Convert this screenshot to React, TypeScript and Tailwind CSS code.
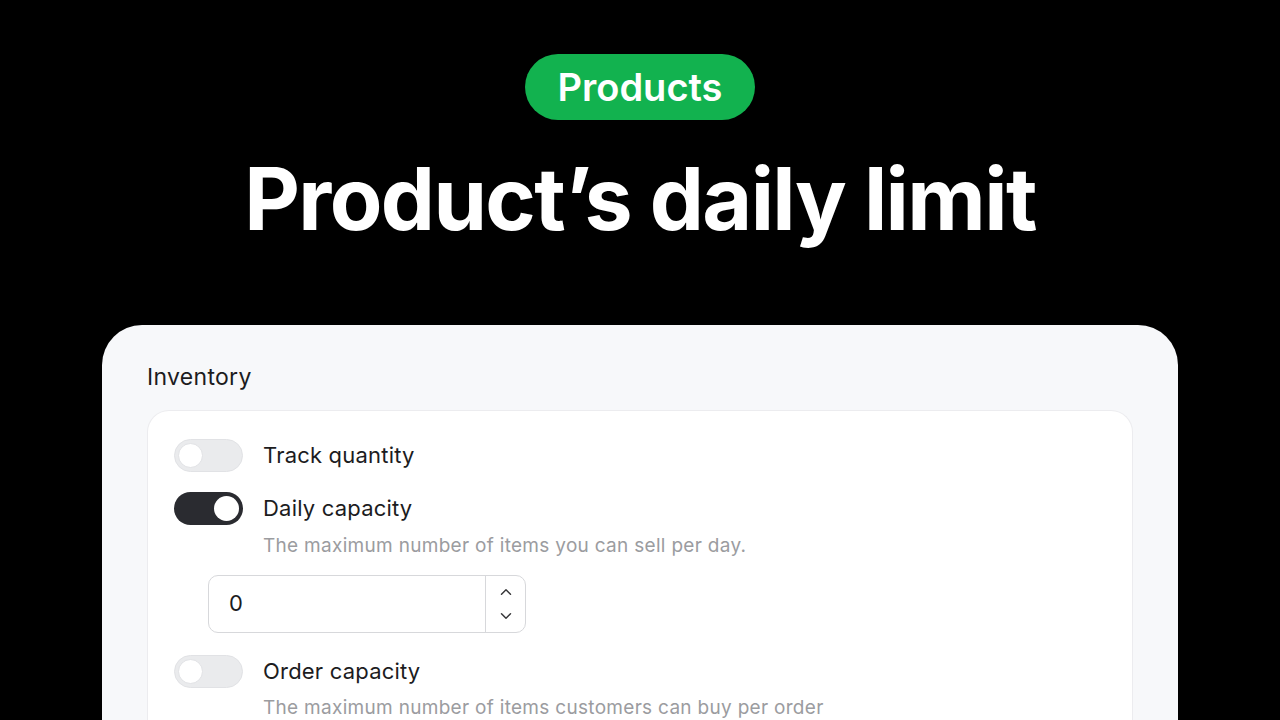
import { ChevronUp, ChevronDown } from "lucide-react";

function Toggle({ on }: { on?: boolean }) {
  return (
    <div
      className={
        on
          ? "flex h-[33px] w-[69px] shrink-0 items-center justify-end rounded-full bg-[#2a2b30] px-[4px]"
          : "flex h-[33px] w-[69px] shrink-0 items-center justify-start rounded-full border border-[#e1e2e5] bg-[#eaebed] px-[3px]"
      }
    >
      <div
        className={
          on
            ? "h-[25px] w-[25px] rounded-full bg-white"
            : "h-[25px] w-[25px] rounded-full border border-[#e1e2e5] bg-white"
        }
      />
    </div>
  );
}

function Row({ on, label }: { on?: boolean; label: string }) {
  return (
    <div className="flex items-center gap-[20px]">
      <Toggle on={on} />
      <span className="text-[22px] tracking-[0.2px] text-[#1c1c1e]">{label}</span>
    </div>
  );
}

function Hint({ children }: { children: React.ReactNode }) {
  return <p className="pl-[89px] text-[19px] tracking-[0.3px] text-[#9b9ca0]">{children}</p>;
}

export default function App() {
  return (
    <div className="flex h-[720px] w-[1280px] flex-col items-center overflow-hidden bg-black font-['Inter',sans-serif]">
      <div className="mt-[54px] flex h-[66px] w-[230px] shrink-0 items-center justify-center rounded-full bg-[#12b24f] text-[38px] font-semibold text-white">
        Products
      </div>
      <h1 className="mt-[27px] shrink-0 text-[86px] leading-[104px] font-bold tracking-[-1.6px] text-white">
        Product’s daily limit
      </h1>

      <div className="mt-[74px] flex w-[1076px] flex-1 shrink-0 flex-col rounded-t-[40px] bg-[#f7f8fa] px-[45px] pt-[38px]">
        <h2 className="text-[23px] leading-[28px] font-normal tracking-[0.3px] text-[#1c1c1e]">Inventory</h2>
        <div className="mt-[19px] flex flex-1 flex-col rounded-t-[22px] border border-b-0 border-[#ececef] bg-white pt-[28px] pl-[26px]">
          <Row label="Track quantity" />
          <div className="mt-[20px]">
            <Row on label="Daily capacity" />
          </div>
          <div className="mt-[7px]">
            <Hint>The maximum number of items you can sell per day.</Hint>
          </div>
          <div className="mt-[14px] ml-[34px] flex h-[58px] w-[318px] shrink-0 overflow-hidden rounded-[10px] border border-[#d7d8db]">
            <div className="flex flex-1 items-center pl-[20px] text-[22px] text-[#1c1c1e]">0</div>
            <div className="flex w-[40px] flex-col items-center justify-center border-l border-[#d7d8db] text-[#3a3a3c]">
              <ChevronUp size={18} strokeWidth={2} />
              <ChevronDown size={18} strokeWidth={2} className="mt-[6px]" />
            </div>
          </div>
          <div className="mt-[22px]">
            <Row label="Order capacity" />
          </div>
          <div className="mt-[6px]">
            <Hint>The maximum number of items customers can buy per order</Hint>
          </div>
        </div>
      </div>
    </div>
  );
}
